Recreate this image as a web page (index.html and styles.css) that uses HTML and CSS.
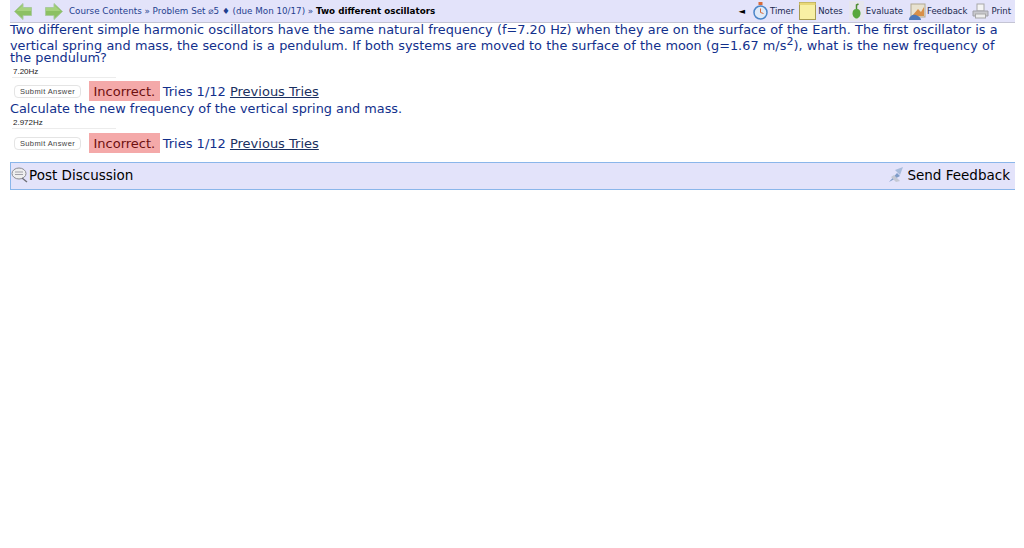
FILE: index.html

```html
<!DOCTYPE html>
<html lang="en">
<head>
  <meta charset="UTF-8" />
  <title>Two different oscillators</title>
  <link rel="stylesheet" href="styles.css">
</head>
<body>
  <div class="page">
    <nav class="topbar">
      <div class="crumbs">
        <svg class="arrow" width="18" height="17" viewBox="0 0 18 17"><path d="M.5 8.500 9 .5v4h8.500v8H9v4z" fill="#8cc063" stroke="#a9c9a0"/><path d="M2 8.500 9 2v3h8v3H2z" fill="#a6d27e"/></svg>
        <svg class="arrow second" width="18" height="17" viewBox="0 0 18 17"><path d="M17.500 8.500 9 .5v4H.5v8H9v4z" fill="#8cc063" stroke="#a9c9a0"/><path d="M16 8.500 9 2v3H1v3h15z" fill="#a6d27e"/></svg>
        <span class="path">Course Contents » Problem Set ⌀5 ♦ (due Mon 10/17) » <b>Two different oscillators</b></span>
      </div>
      <div class="tools">
        <span class="back">◄</span>
        <svg class="i-timer" width="15" height="20" viewBox="0 0 15 20"><rect x="5.500" y="1" width="4" height="3" fill="#d86a3a"/><circle cx="7.500" cy="11.500" r="6.500" fill="#dfeaf8" stroke="#4c86c8" stroke-width="1.500"/><path d="M7.500 7.500v4l3 1" fill="none" stroke="#d86a3a"/></svg>
        <span class="tool t-timer">Timer</span>
        <svg class="i-notes" width="17" height="20" viewBox="0 0 17 20"><rect x=".5" y="1.500" width="16" height="17" fill="#f8f0a4" stroke="#a89c50"/><rect x=".5" y="1.500" width="16" height="2.500" fill="#e8d878"/></svg>
        <span class="tool t-notes">Notes</span>
        <svg class="i-eval" width="15" height="20" viewBox="0 0 15 20"><rect width="15" height="20" fill="#e6e6ec"/><path d="M7.500 8c-3 0-4 2-4 4.500s2 5 4 5 4-2.500 4-5S10.500 8 7.500 8z" fill="#58a83c"/><path d="M7.500 8V4l2-1" fill="none" stroke="#4c8a30" stroke-width="1.500"/></svg>
        <span class="tool t-eval">Evaluate</span>
        <svg class="i-feedback" width="18" height="20" viewBox="0 0 18 20"><rect x="3" y="3" width="14" height="13" fill="#e8e2d0" stroke="#b0a890"/><path d="M4 15l6-7 3 3 3-5v9z" fill="#d89048"/><path d="M1 19c0-4 4-6 7-5s5 3 5 5z" fill="#4c78b8"/></svg>
        <span class="tool t-feedback">Feedback</span>
        <svg class="i-print" width="17" height="20" viewBox="0 0 17 20"><rect x="5" y="3" width="7" height="7" fill="#f4f4f4" stroke="#a8a8a8"/><path d="M1 10h15v5H1z" fill="#c8c8cc" stroke="#a0a0a8"/><rect x="3.500" y="13" width="10" height="4" fill="#eee" stroke="#a8a8a8"/></svg>
        <span class="tool">Print</span>
      </div>
    </nav>

    <main class="problem">
      <p class="question">Two different simple harmonic oscillators have the same natural frequency (f=7.20 Hz) when they are on the surface of the Earth. The first oscillator is a vertical spring and mass, the second is a pendulum. If both systems are moved to the surface of the moon (g=1.67 m/s<sup>2</sup>), what is the new frequency of the pendulum?</p>
      <input class="answer" type="text" value="7.20Hz">
      <div class="status">
        <button class="submit" type="button">Submit Answer</button>
        <span class="incorrect">Incorrect.</span>
        <span class="tries">Tries 1/12 <a href="#">Previous Tries</a></span>
      </div>
      <p class="question part">Calculate the new frequency of the vertical spring and mass.</p>
      <input class="answer" type="text" value="2.972Hz">
      <div class="status last">
        <button class="submit" type="button">Submit Answer</button>
        <span class="incorrect">Incorrect.</span>
        <span class="tries">Tries 1/12 <a href="#">Previous Tries</a></span>
      </div>
    </main>

    <div class="discussion">
      <div class="bar-link">
        <svg width="18" height="18" viewBox="0 0 18 18"><ellipse cx="8" cy="7.500" rx="7" ry="5.500" fill="#eeeeee" stroke="#8a8a90"/><path d="M4 6h8M4 8.500h8" stroke="#a0a0a8"/><path d="M11 12l5 4" stroke="#707078" stroke-width="1.500"/></svg>
        Post Discussion
      </div>
      <div class="bar-link">
        <svg class="send-icon" width="18" height="18" viewBox="0 0 18 18"><path d="M1 16 9 7l3 3z" fill="#7f9cc8"/><path d="M7 4l8-3-3 8z" fill="#a8bcdc"/><path d="M3 11l5 5 4-1-6-6z" fill="#c4c8d4"/></svg>
        Send Feedback
      </div>
    </div>
  </div>
</body>
</html>
```

FILE: styles.css

```css
body {
  margin: 0;
  background: white;
  font-family: "DejaVu Sans", Verdana, sans-serif;
  color: #12308c;
}
.page {
  margin: 0 9px 0 10px;
}
.topbar {
  display: flex;
  justify-content: space-between;
  align-items: center;
  height: 22px;
  background: #e3e3fa;
  border-bottom: 1px solid #c4c4d4;
  font-size: 8.750px;
  color: #1f3f8f;
}
.crumbs {
  display: flex;
  align-items: center;
}
.arrow {
  margin-left: 4px;
}
.arrow.second {
  margin-left: 13px;
}
.path {
  margin-left: 6px;
  white-space: nowrap;
}
.path b {
  color: black;
}
.tools {
  display: flex;
  align-items: center;
  padding-right: 4px;
  font-size: 8.500px;
  color: #1a2a50;
}
.tools svg {
  margin-right: 2px;
}
.tools .i-feedback { margin-right: 1px; }
.back {
  margin-right: 8px;
  color: black;
}
.tool {
  white-space: nowrap;
}
.t-timer { margin-right: 5px; }
.t-notes { margin-right: 6px; }
.t-eval { margin-right: 5px; }
.t-feedback { margin-right: 5px; }
.question {
  margin: 0;
  padding-top: 1px;
  max-width: 992px;
  font-size: 12.850px;
  line-height: 12px;
  word-spacing: .2px;
}
.question sup {
  font-size: 11px;
}
.question.part {
  margin-top: 2px;
  padding-top: 0;
  word-spacing: 0;
}
.answer {
  display: block;
  box-sizing: border-box;
  width: 104px;
  height: 14px;
  margin: 0 0 0 2px;
  padding: 2px 1px 0;
  border: 0;
  border-bottom: 1px solid #ececec;
  font-family: "Liberation Sans", sans-serif;
  font-size: 8px;
  color: #222;
}
.status {
  display: flex;
  align-items: center;
  margin-top: 3px;
  font-size: 13px;
}
.status.last {
  margin-top: 4px;
}
.submit {
  box-sizing: border-box;
  width: 67px;
  height: 13px;
  margin-left: 4px;
  padding: 0;
  background: white;
  border: 1px solid #e4e4e4;
  border-radius: 4px;
  font-family: "Liberation Sans", sans-serif;
  font-size: 7.500px;
  letter-spacing: .4px;
  color: #444;
}
.incorrect {
  margin-left: 8px;
  padding: 0 4.500px;
  height: 20px;
  line-height: 21px;
  background: #f4a9a9;
  color: #6e1010;
}
.tries {
  margin-left: 3px;
}
.tries a {
  color: #1a3060;
}
.discussion {
  display: flex;
  justify-content: space-between;
  align-items: center;
  height: 26px;
  margin-top: 9px;
  background: #e3e3fa;
  border: 1px solid #8ab6ea;
  border-right: 0;
  font-size: 13.500px;
  color: black;
}
.bar-link {
  display: flex;
  align-items: center;
  padding: 0 5px 3px 0;
}
.send-icon {
  margin-right: 1px;
}
```
